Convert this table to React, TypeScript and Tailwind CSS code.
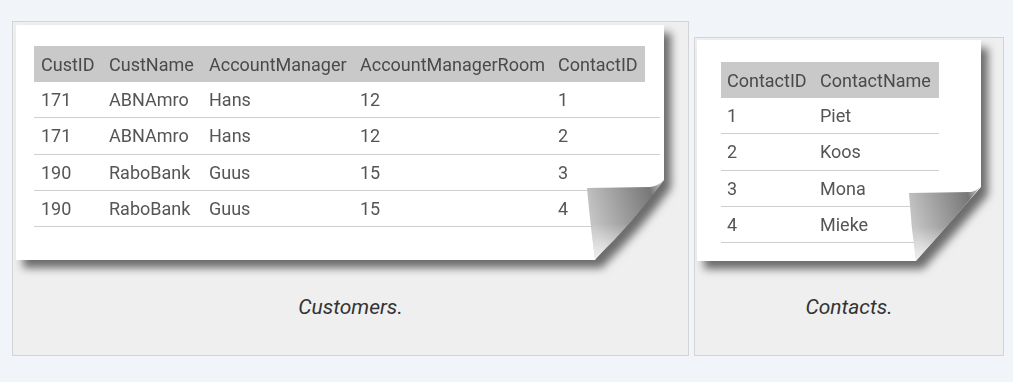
import type { ReactNode } from "react"

const customers = [
  ["171", "ABNAmro", "Hans", "12", "1"],
  ["171", "ABNAmro", "Hans", "12", "2"],
  ["190", "RaboBank", "Guus", "15", "3"],
  ["190", "RaboBank", "Guus", "15", "4"],
]

const contacts = [
  ["1", "Piet"],
  ["2", "Koos"],
  ["3", "Mona"],
  ["4", "Mieke"],
]

// Paper sheet with a curled bottom-right corner; the drop shadow follows the cut shape
function Sheet({
  clip,
  fold,
  id,
  className,
  children,
}: {
  clip: string
  fold: string
  id: string
  className: string
  children: ReactNode
}) {
  return (
    <div className={`relative [filter:drop-shadow(7px_8px_4px_rgba(0,0,0,0.55))] ${className}`}>
      <div className="h-full w-full bg-white" style={{ clipPath: clip }}>
        {children}
      </div>
      <svg className="absolute right-0 bottom-0" width="80" height="80" viewBox="0 0 80 80">
        <defs>
          <linearGradient id={`${id}-side`} x1="0" y1="0.3" x2="1" y2="0">
            <stop offset="0" stopColor="#c4c4c4" />
            <stop offset="0.8" stopColor="#777" />
            <stop offset="1" stopColor="#d6d6d6" />
          </linearGradient>
          <linearGradient id={`${id}-fade`} x1="0" y1="0" x2="0" y2="1">
            <stop offset="0.55" stopColor="#fff" stopOpacity="0" />
            <stop offset="1" stopColor="#fff" stopOpacity="0.75" />
          </linearGradient>
        </defs>
        <path d={fold} fill={`url(#${id}-side)`} />
        <path d={fold} fill={`url(#${id}-fade)`} />
      </svg>
    </div>
  )
}

export default function App() {
  return (
    <div className="flex min-h-[382px] items-end gap-[5px] bg-[#f1f4f8] pt-[21px] pl-[12px] pb-[26px] font-['Roboto','Liberation_Sans',sans-serif]">
      {/* Customers panel */}
      <div className="flex h-[335px] w-[677px] flex-col border border-[#d4d4d4] bg-[#efefef] p-[3px]">
        <Sheet
          className="h-[235px] w-[648px]"
          clip="polygon(0 0, 648px 0, 648px 155px, 579px 235px, 0 235px)"
          fold="M3 8 L66 7 Q74 6 80 0 Q50 42 11 79 Q6 42 3 8 Z"
          id="fold-a"
        >
          <div className="pt-[21px] pl-[18px] text-[18px] text-[#555]">
            <div className="flex h-[36px] w-[611px] items-center bg-[#c9c9c9] text-[#4a4a4a]">
              <div className="w-[68px] pl-[7px]">CustID</div>
              <div className="w-[100px] pl-[7px]">CustName</div>
              <div className="w-[151px] pl-[7px]">AccountManager</div>
              <div className="w-[198px] pl-[7px]">AccountManagerRoom</div>
              <div className="w-[94px] pl-[7px]">ContactID</div>
            </div>
            {customers.map((row, i) => (
              <div key={i} className="flex h-[36.3px] w-[626px] items-center border-b border-[#cfcfcf]">
                <div className="w-[68px] pl-[7px]">{row[0]}</div>
                <div className="w-[100px] pl-[7px]">{row[1]}</div>
                <div className="w-[151px] pl-[7px]">{row[2]}</div>
                <div className="w-[198px] pl-[7px]">{row[3]}</div>
                <div className="w-[94px] pl-[7px]">{row[4]}</div>
              </div>
            ))}
          </div>
        </Sheet>
        <p className="mt-[35px] text-center text-[21px] leading-[24px] text-[#333] italic">Customers.</p>
      </div>

      {/* Contacts panel */}
      <div className="flex h-[319px] w-[310px] flex-col border border-[#d4d4d4] bg-[#efefef] p-[2px]">
        <Sheet
          className="h-[221px] w-[284px]"
          clip="polygon(0 0, 284px 0, 284px 147px, 219px 221px, 0 221px)"
          fold="M8 12 L70 11 Q76 10 80 5 Q50 42 15 79 Q10 46 8 12 Z"
          id="fold-b"
        >
          <div className="pt-[22px] pl-[24px] text-[18px] text-[#555]">
            <div className="flex h-[36px] w-[218px] items-center bg-[#c9c9c9] text-[#4a4a4a]">
              <div className="w-[92px] pl-[6px]">ContactID</div>
              <div className="w-[126px] pl-[7px]">ContactName</div>
            </div>
            {contacts.map((row, i) => (
              <div key={i} className="flex h-[36.3px] w-[218px] items-center border-b border-[#cfcfcf]">
                <div className="w-[92px] pl-[6px]">{row[0]}</div>
                <div className="w-[126px] pl-[7px]">{row[1]}</div>
              </div>
            ))}
          </div>
        </Sheet>
        <p className="mt-[34px] text-center text-[21px] leading-[24px] text-[#333] italic">Contacts.</p>
      </div>
    </div>
  )
}
